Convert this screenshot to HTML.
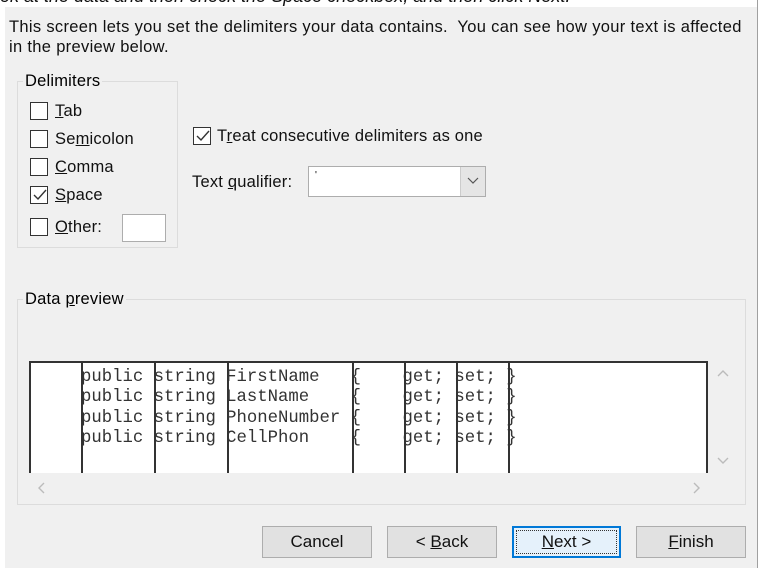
<!DOCTYPE html>
<html><head><meta charset="utf-8"><style>
*{margin:0;padding:0;box-sizing:border-box}
body{width:768px;height:579px;background:#fff;position:relative;overflow:hidden;font-family:"Liberation Sans",sans-serif;font-size:16.5px;color:#000}
.a{position:absolute}
#dlg{left:5px;top:7px;width:752px;height:561px;background:#f0f0f0}
#vline{left:757px;top:0;width:1px;height:568px;background:#a0a0a0}
.cb{position:absolute;width:18px;height:18px;border:1px solid #333;background:#fff}
.lbl{position:absolute;white-space:nowrap;letter-spacing:0.2px;color:#111}
u{text-decoration:underline}
.grp{position:absolute;border:1px solid #dcdcdc}
.gt{position:absolute;background:#f0f0f0;padding:0 2px;white-space:nowrap;letter-spacing:0.2px}
.col{position:absolute;top:361px;width:2px;height:112px;background:#333}
.row{position:absolute;left:81px;font-family:"Liberation Mono",monospace;font-size:17.3px;white-space:pre;line-height:20px;color:#333}
.btn{position:absolute;top:526px;height:32px;width:110px;background:#e1e1e1;border:1px solid #adadad;text-align:center;line-height:30px;font-size:17px;color:#111}
.chk{position:absolute;left:2px;top:1px}
</style></head><body>
<div class="a" style="left:0;top:-14px;font-style:italic;font-size:18px;white-space:nowrap;color:#111">ok at the data and then check the Space checkbox, and then click Next.</div>
<div class="a" id="dlg"></div>
<div class="a" id="vline"></div>
<div class="lbl" style="left:9px;top:17px;line-height:20px;letter-spacing:0.32px">This screen lets you set the delimiters your data contains.&nbsp; You can see how your text is affected<br>in the preview below.</div>

<div class="grp" style="left:17px;top:81px;width:161px;height:167px"></div>
<div class="gt" style="left:23px;top:72px">Delimiters</div>

<div class="cb" style="left:30px;top:102px"></div><div class="lbl" style="left:55px;top:102px"><u>T</u>ab</div>
<div class="cb" style="left:30px;top:130px"></div><div class="lbl" style="left:55px;top:130px">Se<u>m</u>icolon</div>
<div class="cb" style="left:30px;top:158px"></div><div class="lbl" style="left:55px;top:158px"><u>C</u>omma</div>
<div class="cb" style="left:30px;top:186px"><svg class="chk" width="14" height="14" viewBox="0 0 14 14"><path d="M1 7 L5 11 L13 2" stroke="#333" stroke-width="1.4" fill="none"/></svg></div><div class="lbl" style="left:55px;top:186px"><u>S</u>pace</div>
<div class="cb" style="left:30px;top:218px"></div><div class="lbl" style="left:55px;top:218px"><u>O</u>ther:</div>
<div class="a" style="left:122px;top:214px;width:44px;height:28px;background:#fff;border:1px solid #adadad"></div>

<div class="cb" style="left:193px;top:127px"><svg class="chk" width="14" height="14" viewBox="0 0 14 14"><path d="M1 7 L5 11 L13 2" stroke="#333" stroke-width="1.4" fill="none"/></svg></div>
<div class="lbl" style="left:217px;top:127px;letter-spacing:0.2px">T<u>r</u>eat consecutive delimiters as one</div>
<div class="lbl" style="left:192px;top:173px">Text <u>q</u>ualifier:</div>
<div class="a" style="left:308px;top:166px;width:178px;height:31px;background:#fff;border:1px solid #adadad"></div>
<div class="a" style="left:460px;top:167px;width:25px;height:29px;background:#e5e5e5;border-left:1px solid #ccc"></div>
<svg class="a" style="left:466px;top:176px" width="14" height="10"><path d="M2 2 L7 7 L12 2" stroke="#555" stroke-width="1.2" fill="none"/></svg>
<div class="a" style="left:315px;top:170px;font-size:10px">'</div>

<div class="grp" style="left:17px;top:299px;width:729px;height:206px"></div>
<div class="gt" style="left:23px;top:290px">Data <u>p</u>review</div>

<div class="a" style="left:29px;top:361px;width:679px;height:112px;background:#fff;border-top:2px solid #333;border-right:2px solid #333"></div>
<div class="col" style="left:29px"></div>
<div class="col" style="left:81px"></div>
<div class="col" style="left:154px"></div>
<div class="col" style="left:227px"></div>
<div class="col" style="left:352px"></div>
<div class="col" style="left:404px"></div>
<div class="col" style="left:456px"></div>
<div class="col" style="left:508px"></div>
<div class="row" style="top:368px">public string FirstName   {    get; set; }</div>
<div class="row" style="top:388px">public string LastName    {    get; set; }</div>
<div class="row" style="top:409px">public string PhoneNumber {    get; set; }</div>
<div class="row" style="top:429px">public string CellPhon    {    get; set; }</div>

<svg class="a" style="left:716px;top:368px" width="14" height="10"><path d="M2 8 L7 3 L12 8" stroke="#bbb" stroke-width="1.4" fill="none"/></svg>
<svg class="a" style="left:716px;top:456px" width="14" height="10"><path d="M2 2 L7 7 L12 2" stroke="#bbb" stroke-width="1.4" fill="none"/></svg>
<svg class="a" style="left:36px;top:481px" width="10" height="14"><path d="M8 2 L3 7 L8 12" stroke="#bbb" stroke-width="1.4" fill="none"/></svg>
<svg class="a" style="left:692px;top:481px" width="10" height="14"><path d="M2 2 L7 7 L2 12" stroke="#bbb" stroke-width="1.4" fill="none"/></svg>

<div class="btn" style="left:262px">Cancel</div>
<div class="btn" style="left:387px">&lt; <u>B</u>ack</div>
<div class="btn" style="left:512px;width:109px;border:2px solid #0078d7;background:#e5f1fb;line-height:28px"><div style="position:absolute;left:2px;top:2px;right:2px;bottom:2px;border:1px dotted #333"></div><u>N</u>ext &gt;</div>
<div class="btn" style="left:636px"><u>F</u>inish</div>
</body></html>
